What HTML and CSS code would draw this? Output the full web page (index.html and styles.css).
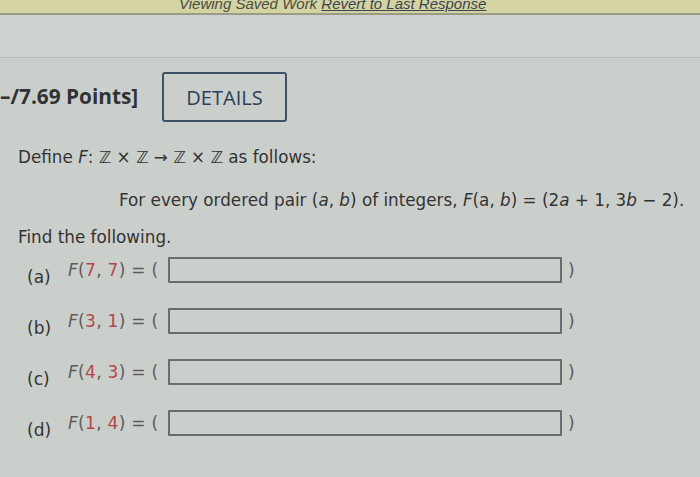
FILE: index.html
```html
<!DOCTYPE html>
<html>
<head>
<meta charset="utf-8">
<link rel="stylesheet" href="styles.css">
</head>
<body>
<div class="banner"><span class="banner-text">Viewing Saved Work <a class="revert">Revert to Last Response</a></span></div>
<div class="strip"></div>
<div class="head">
  <div class="points">–/7.69 Points]</div>
  <div class="details">DETAILS</div>
</div>
<div class="content">
  <p class="define">Define <i>F</i>: ℤ × ℤ → ℤ × ℤ as follows:</p>
  <p class="rule">For every ordered pair (<i>a</i>, <i>b</i>) of integers, <i>F</i>(a, <i>b</i>) = (2<i>a</i> + 1, 3<i>b</i> − 2).</p>
  <p class="find">Find the following.</p>
  <div class="rows">
    <div class="row"><span class="label">(a)</span><span class="expr"><i>F</i>(<span class="n">7</span>, <span class="n">7</span>) = (</span><span class="box"></span><span class="close">)</span></div>
    <div class="row"><span class="label">(b)</span><span class="expr"><i>F</i>(<span class="n">3</span>, <span class="n">1</span>) = (</span><span class="box"></span><span class="close">)</span></div>
    <div class="row"><span class="label">(c)</span><span class="expr"><i>F</i>(<span class="n">4</span>, <span class="n">3</span>) = (</span><span class="box"></span><span class="close">)</span></div>
    <div class="row"><span class="label">(d)</span><span class="expr"><i>F</i>(<span class="n">1</span>, <span class="n">4</span>) = (</span><span class="box"></span><span class="close">)</span></div>
  </div>
</div>
</body>
</html>
```
FILE: styles.css
```css
html, body {
  margin: 0;
  padding: 0;
}
body {
  width: 700px;
  height: 477px;
  overflow: hidden;
  background: #cbcfcc;
  font-family: "DejaVu Sans", Verdana, sans-serif;
  color: #333;
}
.banner {
  height: 15px;
  overflow: hidden;
  background: #d3d4a2;
  border-bottom: 2px solid #9a9c88;
  box-sizing: border-box;
}
.banner-text {
  display: block;
  margin-top: -5px;
  padding-left: 179px;
  font-family: "Liberation Sans", Arial, sans-serif;
  font-style: italic;
  font-size: 15px;
  line-height: 17px;
  color: #4a4b45;
}
.revert {
  color: #3b4250;
  text-decoration: underline;
}
.strip {
  height: 42px;
  background: #ced2cf;
  border-bottom: 1px solid #b9bdba;
}
.head {
  display: flex;
  align-items: center;
  padding-top: 14px;
  height: 50px;
}
.points {
  font-family: "Open Sans", sans-serif;
  font-weight: 700;
  font-size: 20.8px;
  color: #303233;
  width: 162px;
  padding-left: 0;
  margin-top: -3px;
  box-sizing: border-box;
}
.details {
  width: 125px;
  height: 50px;
  box-sizing: border-box;
  border: 2px solid #3d5266;
  border-radius: 3px;
  display: flex;
  align-items: center;
  justify-content: center;
  font-family: "Open Sans", sans-serif;
  font-size: 20px;
  color: #2a405a;
}
.content {
  padding-left: 18px;
}
.content p {
  margin: 0;
  font-size: 16.8px;
  line-height: 20px;
}
.define {
  padding-top: 25px;
}
.rule {
  padding-top: 23px;
  padding-left: 101px;
}
.find {
  padding-top: 17px;
}
i {
  font-style: italic;
}
.rows {
  padding-top: 10px;
}
.row {
  display: flex;
  align-items: flex-start;
  height: 26px;
  margin-bottom: 25px;
  font-size: 17px;
  line-height: 20px;
}
.label {
  width: 41px;
  padding-left: 9px;
  margin-top: 10px;
  color: #333;
}
.expr {
  width: 100px;
  margin-top: 3px;
  color: #5a5c5b;
  letter-spacing: 0.3px;
}
.n {
  color: #b5454a;
}
.box {
  width: 394px;
  height: 26px;
  box-sizing: border-box;
  border: 2px solid #6a6c6b;
  border-radius: 1px;
}
.close {
  margin-left: 6px;
  margin-top: 3px;
  color: #5a5c5b;
}
```
